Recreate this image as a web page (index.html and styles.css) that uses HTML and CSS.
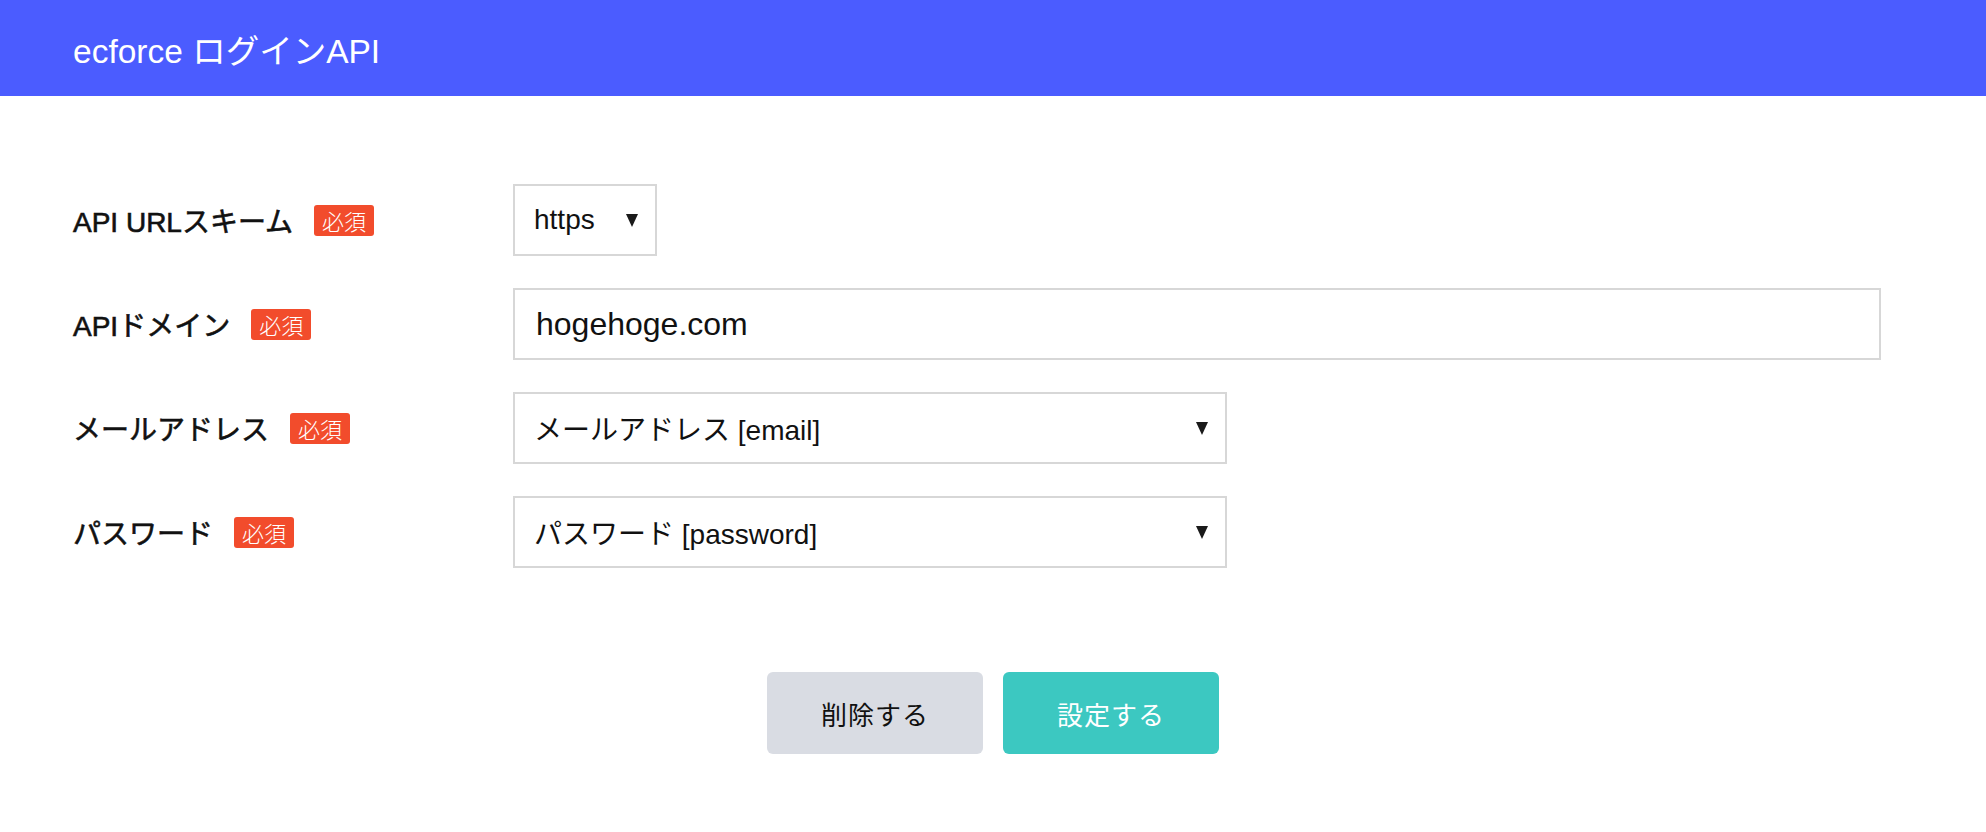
FILE: index.html
```html
<!DOCTYPE html>
<html lang="ja">
<head>
<meta charset="utf-8">
<title>ecforce ログインAPI</title>
<link rel="stylesheet" href="styles.css">
</head>
<body>
<header class="topbar">
  <h1 class="title">ecforce ログインAPI</h1>
</header>
<main class="content">
  <form class="form">
    <div class="label-cell"><span class="label">API URLスキーム</span><span class="badge">必須</span></div>
    <div class="field-cell">
      <div class="select select-scheme"><span class="select-text">https</span><span class="arrow"></span></div>
    </div>

    <div class="label-cell"><span class="label">APIドメイン</span><span class="badge">必須</span></div>
    <div class="field-cell">
      <div class="input">hogehoge.com</div>
    </div>

    <div class="label-cell"><span class="label">メールアドレス</span><span class="badge">必須</span></div>
    <div class="field-cell">
      <div class="select select-wide"><span class="select-text">メールアドレス [email]</span><span class="arrow"></span></div>
    </div>

    <div class="label-cell"><span class="label">パスワード</span><span class="badge">必須</span></div>
    <div class="field-cell">
      <div class="select select-wide"><span class="select-text">パスワード [password]</span><span class="arrow"></span></div>
    </div>
  </form>
</main>
<div class="actions">
  <button class="btn btn-delete" type="button">削除する</button>
  <button class="btn btn-save" type="button">設定する</button>
</div>
</body>
</html>
```

FILE: styles.css
```css
* { box-sizing: border-box; }

body {
  margin: 0;
  background: #ffffff;
  font-family: "Liberation Sans", "Noto Sans CJK JP", sans-serif;
  color: #111;
}

.topbar {
  height: 96px;
  background: #4b5cff;
  display: flex;
  align-items: center;
  padding-left: 73px;
}

.title {
  margin: 0;
  color: #ffffff;
  font-size: 33.5px;
  font-weight: 400;
}

.content {
  padding: 88px 105px 0 73px;
}

.form {
  display: grid;
  grid-template-columns: 440px 1fr;
  row-gap: 32px;
  align-items: center;
}

.label-cell {
  display: flex;
  align-items: center;
  gap: 21px;
}

.label {
  font-size: 28px;
  font-weight: 400;
  color: #111;
  -webkit-text-stroke: 0.6px #111;
}

.badge {
  display: inline-flex;
  align-items: center;
  justify-content: center;
  height: 31px;
  padding: 0 8px;
  background: #f24c2c;
  color: #ffffff;
  font-family: "Noto Sans CJK JP", sans-serif;
  font-size: 22px;
  font-weight: 300;
  border-radius: 3px;
}

.field-cell {
  display: flex;
}

.select, .input {
  height: 72px;
  border: 2px solid #d7d7d7;
  background: #fff;
  display: flex;
  align-items: center;
  color: #111;
}

.select {
  justify-content: space-between;
  padding: 0 17px 0 19px;
  font-size: 28px;
}

.select-scheme { width: 144px; }
.select-wide { width: 714px; }

.arrow {
  width: 0;
  height: 0;
  border-left: 6px solid transparent;
  border-right: 6px solid transparent;
  border-top: 13px solid #1a1a1a;
}

.input {
  width: 100%;
  padding: 0 21px;
  font-size: 32px;
}

.actions {
  display: flex;
  justify-content: center;
  gap: 20px;
  margin-top: 104px;
}

.btn {
  width: 216px;
  height: 82px;
  border: none;
  border-radius: 6px;
  font-family: "Noto Sans CJK JP", sans-serif;
  font-size: 26px;
  letter-spacing: 1px;
}

.btn-delete {
  background: #d9dce3;
  color: #111;
}

.btn-save {
  background: #3cc8c1;
  color: #ffffff;
}
```
